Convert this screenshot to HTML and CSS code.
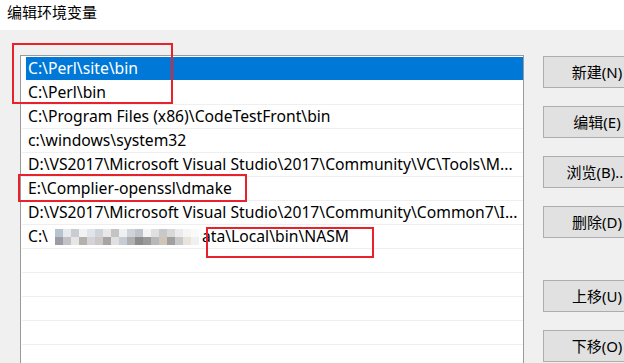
FILE: index.html
```html
<!DOCTYPE html>
<html lang="zh-CN">
<head>
<meta charset="utf-8">
<title>编辑环境变量</title>
<link rel="stylesheet" href="styles.css">
</head>
<body>
<div class="window">
  <div class="titlebar">编辑环境变量</div>
  <div class="content">
    <div class="listbox">
      <div class="row selected"><span class="hl">C:\Perl\site\bin</span></div>
      <div class="row"><span class="tx">C:\Perl\bin</span></div>
      <div class="row"><span class="tx">C:\Program Files (x86)\CodeTestFront\bin</span></div>
      <div class="row"><span class="tx">c:\windows\system32</span></div>
      <div class="row"><span class="tx">D:\VS2017\Microsoft Visual Studio\2017\Community\VC\Tools\M...</span></div>
      <div class="row"><span class="tx">E:\Complier-openssl\dmake</span></div>
      <div class="row"><span class="tx">D:\VS2017\Microsoft Visual Studio\2017\Community\Common7\I...</span></div>
      <div class="row"><span class="tx">C:\<span class="mosaic"></span>ata\Local\bin\NASM</span></div>
      <div class="row"></div>
      <div class="row"></div>
      <div class="row"></div>
      <div class="row"></div>
      <div class="row"></div>
    </div>
    <div class="buttons">
      <div class="btn">新建(N)</div>
      <div class="btn">编辑(E)</div>
      <div class="btn">浏览(B)...</div>
      <div class="btn">删除(D)</div>
      <div class="btn gap">上移(U)</div>
      <div class="btn">下移(O)</div>
    </div>
  </div>
  <div class="mark mark1"></div>
  <div class="mark mark2"></div>
  <div class="mark mark3"></div>
</div>
</body>
</html>
```

FILE: styles.css
```css
html, body {
  margin: 0;
  padding: 0;
}
body {
  width: 624px;
  height: 363px;
  overflow: hidden;
  font-family: "Noto Sans", "Noto Sans CJK SC", sans-serif;
  font-size: 15px;
  color: #000;
  background: #f0f0f0;
}
.window {
  position: relative;
  width: 624px;
  height: 363px;
  overflow: hidden;
}
.titlebar {
  height: 30px;
  background: #fff;
  padding-left: 7px;
  line-height: 24px;
  font-family: "Noto Sans CJK SC", sans-serif;
  font-size: 15px;
}
.content {
  display: flex;
  align-items: flex-start;
  padding-left: 20px;
  padding-top: 25px;
}
.listbox {
  width: 502px;
  height: 340px;
  border: 1px solid #9a9a9a;
  background: #fff;
  padding-top: 1px;
  flex: none;
  font-size: 15.7px;
}
.row {
  height: 23px;
  line-height: 23px;
  margin-left: 1px;
  border-bottom: 1px solid #efefef;
  white-space: nowrap;
  overflow: hidden;
}
.tx {
  padding-left: 6px;
}
.row.selected {
  border-bottom-color: #fff;
}
.hl {
  display: block;
  margin-left: 4px;
  padding-left: 2px;
  background: #0078d7;
  color: #fff;
  height: 23px;
}
.mosaic {
  display: inline-block;
  width: 144px;
  height: 16px;
  margin-left: 7px;
  margin-right: 3px;
  vertical-align: -3px;
  background-image:
    linear-gradient(to right,
      #b7c3cf 0 8px, #e6eaee 8px 16px, #c9cdd2 16px 24px, #f2f2f2 24px 32px,
      #dfe5ec 32px 40px, #cfd3da 40px 48px, #e8e8e8 48px 56px, #c4c4c4 56px 64px,
      #f0f0f0 64px 72px, #d0d4d8 72px 80px, #bfc5cb 80px 88px, #f4f4f4 88px 96px,
      #e0e0e0 96px 104px, #c8c8c8 104px 112px, #d8d8d8 112px 120px, #ebebeb 120px 128px,
      #f5f5f5 128px 136px, #fafafa 136px 144px),
    linear-gradient(to right,
      #9c9ca4 0 8px, #c2c2c6 8px 16px, #e6e6e6 16px 24px, #b5b2ae 24px 32px,
      #d4d4d8 32px 40px, #ccc8c8 40px 48px, #a8a4a4 48px 56px, #e0e0e0 56px 64px,
      #c6ccd4 64px 72px, #b0b0b0 72px 80px, #8c8c8c 80px 88px, #9a9a9a 88px 96px,
      #b8b8b8 96px 104px, #cfc6b8 104px 112px, #a0a0a0 112px 120px, #c8c8c8 120px 128px,
      #e8e4dc 128px 136px, #f0f0f0 136px 144px);
  background-size: 100% 8px, 100% 8px;
  background-position: 0 0, 0 8px;
  background-repeat: no-repeat;
}
.buttons {
  display: flex;
  flex-direction: column;
  gap: 18px;
  margin-left: 19px;
  margin-top: 1px;
  flex: none;
}
.btn {
  width: 106px;
  height: 30px;
  line-height: 30px;
  border: 1px solid #adadad;
  background: #e1e1e1;
  text-align: center;
  font-family: "Noto Sans", "Noto Sans CJK SC", sans-serif;
  font-size: 15px;
  white-space: nowrap;
}
.btn.gap {
  margin-top: 24px;
}
.mark {
  position: absolute;
  border: 2px solid #e8212a;
  box-sizing: border-box;
}
.mark1 {
  left: 12px;
  top: 43px;
  width: 161px;
  height: 61px;
}
.mark2 {
  left: 18px;
  top: 174px;
  width: 229px;
  height: 28px;
}
.mark3 {
  left: 206px;
  top: 227px;
  width: 168px;
  height: 31px;
}
```
